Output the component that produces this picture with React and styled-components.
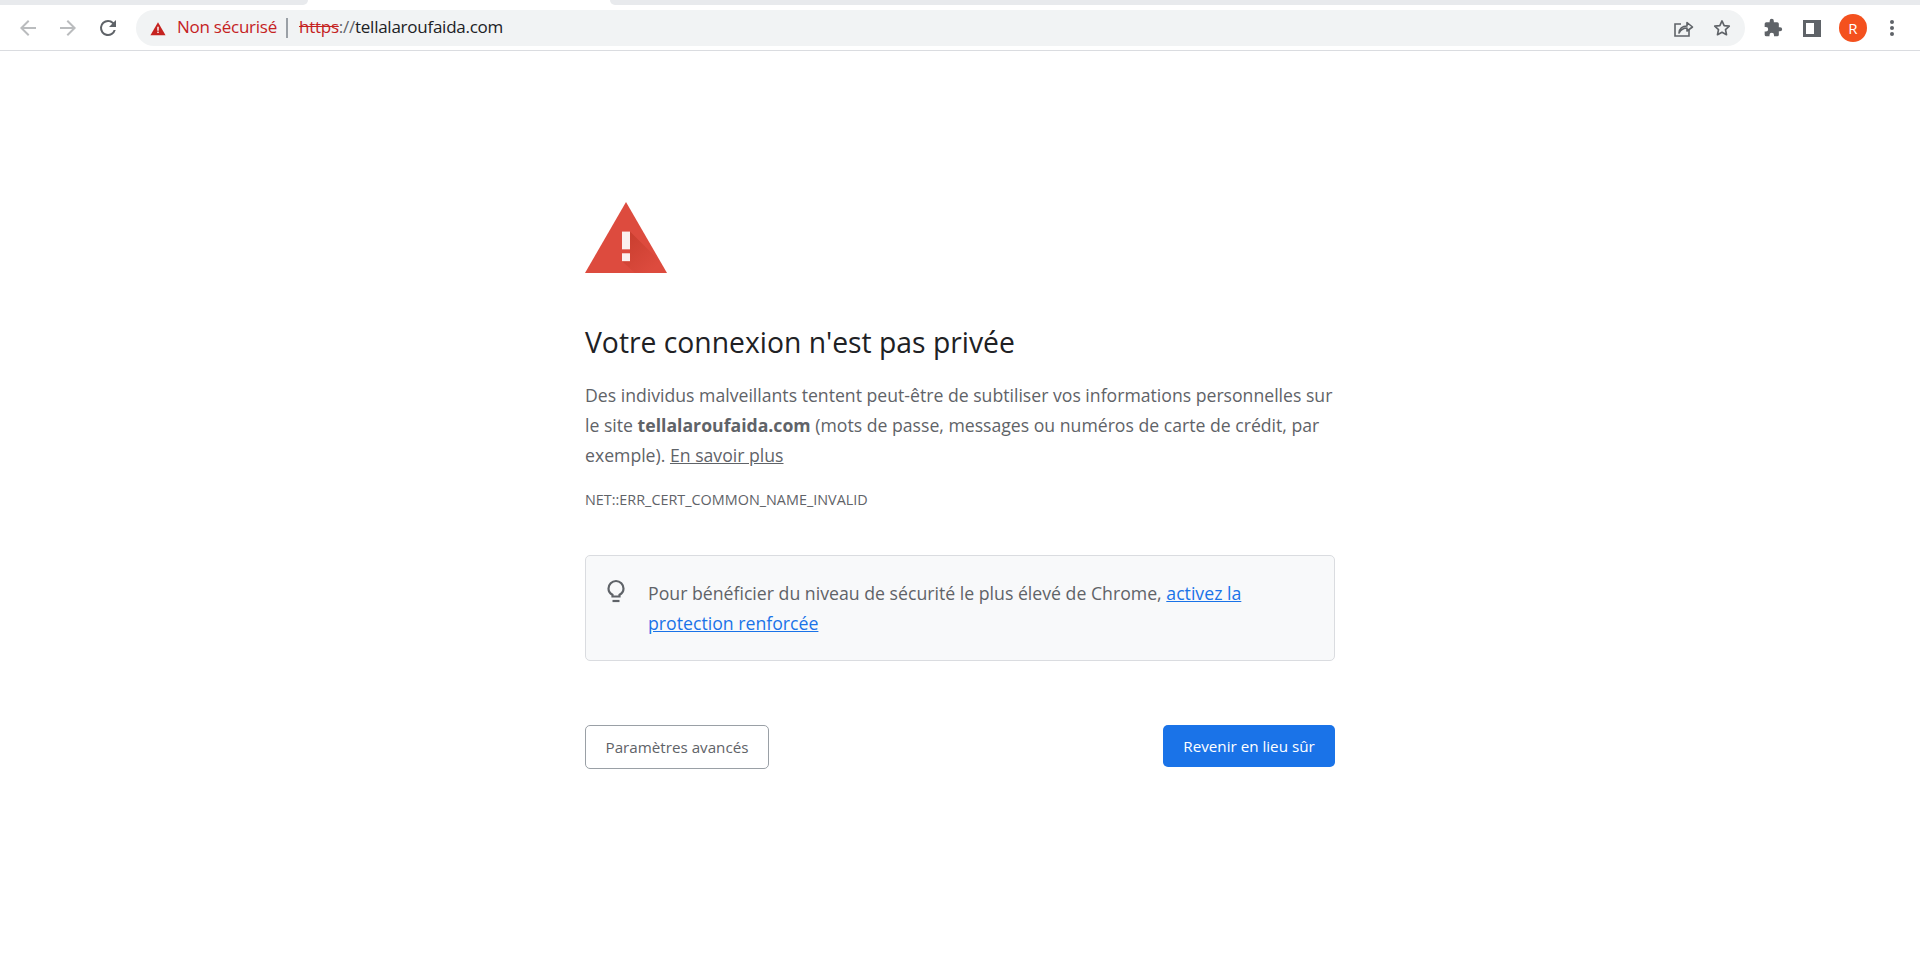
import React from "react";
import styled, { createGlobalStyle } from "styled-components";

const Global = createGlobalStyle`
  html, body { margin: 0; padding: 0; background: #fff; height: 100%; overflow: hidden; }
  body { font-family: "Open Sans", "Noto Sans", sans-serif; }
`;
const Page = styled.div`display: flex; flex-direction: column; height: 972px;`;
const TabStrip = styled.div`height: 5px; display: flex; background: #fff; flex: none;`;
const TabPiece = styled.div`
  background: #e8eaed;
  width: ${p => p.$w || "auto"};
  flex: ${p => p.$grow ? 1 : "none"};
  border-radius: ${p => p.$r};
`;
const TabGap = styled.div`width: 302px; flex: none;`;
const Toolbar = styled.div`
  height: 44px; flex: none; display: flex; align-items: center;
  border-bottom: 1px solid #dadce0; padding: 1px 26px 0 16px; box-sizing: content-box;
`;
const Nav = styled.button`
  width: 24px; height: 24px; padding: 0; border: 0; background: none; display: flex;
  align-items: center; justify-content: center; margin-right: 16px; flex: none;
`;
const Omnibox = styled.div`
  flex: 1; height: 36px; background: #f1f3f4; border-radius: 18px; display: flex; align-items: center;
  padding: 0 13px 0 14px; margin-right: 16px;
`;
const Warn = styled.span`color: #c5221f; font-size: 17px; line-height: 22px; padding-bottom: 2px; margin-left: 11px; letter-spacing: -0.25px; white-space: nowrap;`;
const Sep = styled.span`width: 2px; height: 20px; background: #9aa0a6; margin: 0 11px 0 9px;`;
const Url = styled.span`font-size: 17px; line-height: 22px; padding-bottom: 2px; color: #202124; letter-spacing: -0.25px; white-space: nowrap;`;
const Scheme = styled.span`color: #c5221f; text-decoration: line-through;`;
const Slashes = styled.span`color: #5f6368;`;
const Spacer = styled.div`flex: 1;`;
const OmniIcon = styled.span`display: flex; margin-left: ${p => p.$ml || 0}px;`;
const Ext = styled.span`display: flex; width: 24px; height: 24px; align-items: center; justify-content: center; margin-right: 15px;`;
const Avatar = styled.div`
  width: 28px; height: 28px; border-radius: 50%; background: #f4511e; color: #fff; font-size: 15px;
  display: flex; align-items: center; justify-content: center; margin-right: 23px;
`;
const Main = styled.main`flex: 1; display: flex; justify-content: center;`;
const Column = styled.div`width: 750px; padding-top: 151px; box-sizing: border-box; display: flex; flex-direction: column;`;
const Hazard = styled.svg`display: block; width: 82px; height: 71px;`;
const Title = styled.h1`
  margin: 51px 0 0; font-size: 28.3px; line-height: 36px; font-weight: 400; color: #202124; letter-spacing: 0;
`;
const Para = styled.p`margin: 20px 0 0; font-size: 17.65px; line-height: 30px; color: #5f6368;`;
const Bold = styled.strong`font-weight: 700;`;
const Learn = styled.a`color: #5f6368; text-decoration: underline;`;
const Code = styled.div`margin-top: 20px; font-size: 14.4px; line-height: 20px; color: #5f6368; text-transform: uppercase;`;
const Tip = styled.div`
  margin-top: 45px; height: 106px; box-sizing: border-box; border: 1px solid #dadce0; border-radius: 5px;
  background: #f8f9fa; display: flex; padding: 22px 20px 0 20px;
`;
const Bulb = styled.svg`width: 20px; height: 26px; flex: none; margin-right: 22px; margin-top: 1px;`;
const TipText = styled.div`font-size: 17.7px; line-height: 30px; color: #5f6368;`;
const TipLink = styled.a`color: #1a73e8; text-decoration: underline;`;
const Actions = styled.div`margin-top: 64px; display: flex; justify-content: space-between; align-items: flex-start;`;
const Button = styled.button`
  font-family: inherit; font-size: 15.2px; border-radius: 5px; padding: 0; box-sizing: border-box;
  width: ${p => p.$primary ? "172px" : "184px"};
  height: ${p => p.$primary ? "42px" : "44px"};
  background: ${p => p.$primary ? "#1a73e8" : "#fff"};
  color: ${p => p.$primary ? "#fff" : "#5f6368"};
  border: ${p => p.$primary ? "0" : "1px solid #9aa0a6"};
`;

const Arrow = ({ flip, color }) => (
  <svg width="24" height="24" viewBox="0 0 24 24" style={flip ? { transform: "scaleX(-1)" } : undefined}>
    <path d="M20 11H7.83l5.59-5.59L12 4l-8 8 8 8 1.41-1.41L7.83 13H20v-2z" fill={color} />
  </svg>
);

export default function App() {
  return (
    <Page>
      <Global />
      <TabStrip>
        <TabPiece $w="308px" $r="0 0 10px 0" />
        <TabGap />
        <TabPiece $grow $r="0 0 0 10px" />
      </TabStrip>
      <Toolbar>
        <Nav><Arrow color="#babcbe" /></Nav>
        <Nav><Arrow flip color="#babcbe" /></Nav>
        <Nav>
          <svg width="24" height="24" viewBox="0 0 24 24"><path fill="#5f6368" d="M17.65 6.35A7.95 7.95 0 0 0 12 4a8 8 0 1 0 7.73 10h-2.08A6 6 0 1 1 12 6c1.66 0 3.14.69 4.22 1.78L13 11h7V4l-2.35 2.35z" /></svg>
        </Nav>
        <Omnibox>
          <svg width="16" height="15" viewBox="0 0 18 16"><path fill="#c5221f" d="M9 1 L17.500 15.500 H.5 Z" /><rect x="8.200" y="6" width="1.600" height="4.500" fill="#fff" /><rect x="8.200" y="11.500" width="1.600" height="1.600" fill="#fff" /></svg>
          <Warn>Non sécurisé</Warn>
          <Sep />
          <Url><Scheme>https</Scheme><Slashes>://</Slashes>tellalaroufaida.com</Url>
          <Spacer />
          <OmniIcon>
            <svg width="22" height="22" viewBox="0 0 22 22" fill="none" stroke="#5f6368" strokeWidth="1.600"><path d="M17 12.500V19H3V7h6" /><path d="M7 16c.5-4.500 3.500-7 8-7V5.500L20.500 10 15 14v-3c-3.500 0-6 1.500-8 5z" strokeLinejoin="round" /></svg>
          </OmniIcon>
          <OmniIcon $ml={18}>
            <svg width="20" height="20" viewBox="0 0 24 24" fill="none" stroke="#5f6368" strokeWidth="2"><path strokeLinejoin="round" d="M12 3.500l2.600 5.600 6.100.7-4.500 4.200 1.200 6.100L12 17.100l-5.400 3 1.200-6.100-4.500-4.200 6.100-.7z" /></svg>
          </OmniIcon>
        </Omnibox>
        <Ext>
          <svg width="20" height="20" viewBox="0 0 24 24"><path fill="#5f6368" d="M20.500 11H19V7a2 2 0 0 0-2-2h-4V3.500a2.500 2.500 0 0 0-5 0V5H4a2 2 0 0 0-2 2v3.800h1.500a2.700 2.700 0 0 1 0 5.400H2V20a2 2 0 0 0 2 2h3.800v-1.500a2.700 2.700 0 0 1 5.400 0V22H17a2 2 0 0 0 2-2v-4h1.500a2.500 2.500 0 0 0 0-5z" /></svg>
        </Ext>
        <Ext>
          <svg width="18" height="17" viewBox="0 0 18 17"><path fill="#5f6368" fillRule="evenodd" d="M0 0h18v17H0zM3 3v11h8V3z" /></svg>
        </Ext>
        <Avatar>R</Avatar>
        <svg width="4" height="16" viewBox="0 0 4 16"><circle cx="2" cy="2" r="2" fill="#5f6368" /><circle cx="2" cy="8" r="2" fill="#5f6368" /><circle cx="2" cy="14" r="2" fill="#5f6368" /></svg>
      </Toolbar>
      <Main>
        <Column>
          <Hazard viewBox="0 0 82 72" preserveAspectRatio="none">
            <defs><linearGradient id="sh" x1="0" y1="0" x2="1" y2="1"><stop offset="0" stopColor="#a52714" stopOpacity="0.4" /><stop offset="0.8" stopColor="#a52714" stopOpacity="0" /></linearGradient></defs>
            <path fill="#dd4b3e" d="M41 0 L82 72 H0 Z" />
            <path fill="url(#sh)" d="M45 30 L72 57 L82 72 H50 L37 60 L45 51Z" />
            <rect x="37" y="30" width="8" height="18" fill="#fbf0ee" />
            <rect x="37" y="52" width="8" height="8" fill="#fbf0ee" />
          </Hazard>
          <Title>Votre connexion n'est pas privée</Title>
          <Para>Des individus malveillants tentent peut-être de subtiliser vos informations personnelles sur le site <Bold>tellalaroufaida.com</Bold> (mots de passe, messages ou numéros de carte de crédit, par exemple). <Learn>En savoir plus</Learn></Para>
          <Code>net::ERR_CERT_COMMON_NAME_INVALID</Code>
          <Tip>
            <Bulb viewBox="0 0 20 26" fill="none" stroke="#5f6368" strokeWidth="2.200">
              <path d="M6.500 17.500v-1.700C4 14.500 2.500 12.300 2.500 9.500a7.500 7.500 0 0 1 15 0c0 2.800-1.500 5-4 6.300v1.700z" />
              <path d="M6.500 22h7" />
            </Bulb>
            <TipText>Pour bénéficier du niveau de sécurité le plus élevé de Chrome, <TipLink>activez la protection renforcée</TipLink></TipText>
          </Tip>
          <Actions>
            <Button>Paramètres avancés</Button>
            <Button $primary>Revenir en lieu sûr</Button>
          </Actions>
        </Column>
      </Main>
    </Page>
  );
}
